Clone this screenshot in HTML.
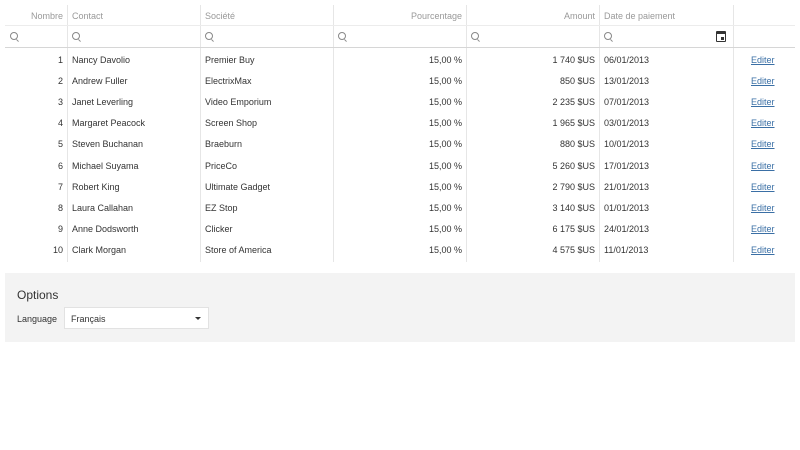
<!DOCTYPE html>
<html><head><meta charset="utf-8"><style>
body{margin:0;width:800px;height:450px;background:#fff;font-family:"Liberation Sans",sans-serif;font-size:9px;color:#333;position:relative;overflow:hidden}
.a{position:absolute;white-space:nowrap}
.vl{position:absolute;top:5px;height:257px;width:1px;background:#e6e6e6}
.hl{position:absolute;left:5px;width:790px;height:1px}
.h{color:#999;top:11px}
.r{text-align:right}
.s{position:absolute;width:6px;height:6px;border:1px solid #888;border-radius:50%}
.s:after{content:"";position:absolute;width:3px;height:1px;background:#888;left:5px;top:7px;transform:rotate(45deg)}
a{color:#3a6fa5;text-decoration:underline}
</style></head><body>
<div class="vl" style="left:67px"></div>
<div class="vl" style="left:200px"></div>
<div class="vl" style="left:333px"></div>
<div class="vl" style="left:466px"></div>
<div class="vl" style="left:599px"></div>
<div class="vl" style="left:733px"></div>
<div class="hl" style="top:25px;background:#ececec"></div>
<div class="hl" style="top:47px;background:#d6d6d6"></div>
<div class="a h r" style="left:5px;width:58px">Nombre</div>
<div class="a h" style="left:72px">Contact</div>
<div class="a h" style="left:205px">Société</div>
<div class="a h r" style="left:333px;width:129px">Pourcentage</div>
<div class="a h r" style="left:466px;width:129px">Amount</div>
<div class="a h" style="left:604px">Date de paiement</div>
<div class="s" style="left:10px;top:32px"></div>
<div class="s" style="left:72px;top:32px"></div>
<div class="s" style="left:205px;top:32px"></div>
<div class="s" style="left:338px;top:32px"></div>
<div class="s" style="left:471px;top:32px"></div>
<div class="s" style="left:604px;top:32px"></div>
<div class="a" style="left:716px;top:31px;width:8px;height:7px;border:1.5px solid #333;border-top-width:3px;border-radius:1px"><div style="position:absolute;right:1px;bottom:1px;width:3px;height:3px;background:#333"></div></div>
<div id="rows"></div>
<div class="a" style="left:5px;top:273px;width:790px;height:69px;background:#f3f3f3"></div>
<div class="a" style="left:17px;top:288px;font-size:12px;color:#333">Options</div>
<div class="a" style="left:17px;top:314px;font-size:9px">Language</div>
<div class="a" style="left:64px;top:307px;width:145px;height:22px;background:#fff;border:1px solid #e2e2e2;box-sizing:border-box"></div>
<div class="a" style="left:71px;top:314px">Français</div>
<div class="a" style="left:195px;top:317px;width:0;height:0;border-left:3px solid transparent;border-right:3px solid transparent;border-top:3px solid #333"></div>
<script>
var d=[["Nancy Davolio","Premier Buy","1 740","06/01/2013"],["Andrew Fuller","ElectrixMax","850","13/01/2013"],["Janet Leverling","Video Emporium","2 235","07/01/2013"],["Margaret Peacock","Screen Shop","1 965","03/01/2013"],["Steven Buchanan","Braeburn","880","10/01/2013"],["Michael Suyama","PriceCo","5 260","17/01/2013"],["Robert King","Ultimate Gadget","2 790","21/01/2013"],["Laura Callahan","EZ Stop","3 140","01/01/2013"],["Anne Dodsworth","Clicker","6 175","24/01/2013"],["Clark Morgan","Store of America","4 575","11/01/2013"]];
var h="";d.forEach(function(r,i){var t=(54.5+i*21.2).toFixed(1);
h+='<div class="a r" style="top:'+t+'px;left:5px;width:58px">'+(i+1)+'</div><div class="a" style="top:'+t+'px;left:72px">'+r[0]+'</div><div class="a" style="top:'+t+'px;left:205px">'+r[1]+'</div><div class="a r" style="top:'+t+'px;left:333px;width:129px">15,00 %</div><div class="a r" style="top:'+t+'px;left:466px;width:129px">'+r[2]+' $US</div><div class="a" style="top:'+t+'px;left:604px">'+r[3]+'</div><div class="a" style="top:'+t+'px;left:751px"><a>Editer</a></div>';});
document.getElementById("rows").innerHTML=h;
</script>
</body></html>
